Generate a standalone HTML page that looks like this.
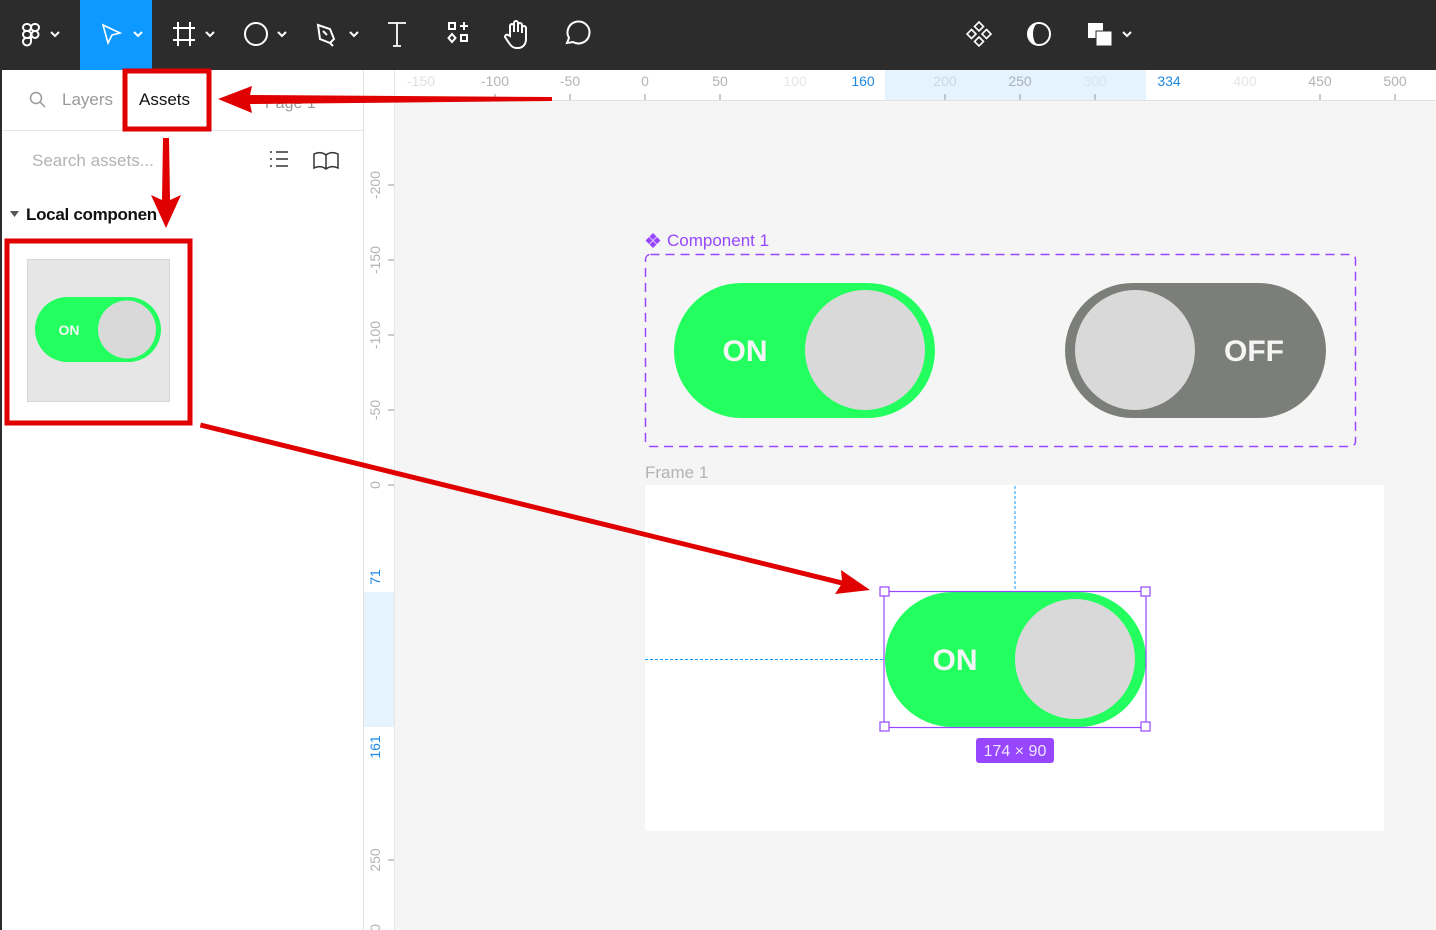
<!DOCTYPE html>
<html><head><meta charset="utf-8"><style>
*{margin:0;padding:0;box-sizing:border-box}
body{width:1436px;height:930px;overflow:hidden;background:#f5f5f5;font-family:"Liberation Sans",sans-serif;position:relative}
.a{position:absolute}
</style></head><body>
<div class="a" style="left:0;top:0;width:1436px;height:70px;background:#2c2c2c"></div>
<div class="a" style="left:80px;top:0;width:72px;height:70px;background:#0d99ff"></div>
<div class="a" style="left:0;top:70px;width:363px;height:860px;background:#fff;border-left:2px solid #2c2c2c"></div>
<div class="a" style="left:2px;top:130px;width:361px;height:1px;background:#e6e6e6"></div>
<div class="a" style="left:62px;top:90px;font-size:17px;color:#999">Layers</div>
<div class="a" style="left:139px;top:90px;font-size:17px;color:#111">Assets</div>
<div class="a" style="left:32px;top:151px;font-size:17px;color:#b3b3b3">Search assets...</div>
<div class="a" style="left:26px;top:205px;font-size:17px;color:#111;font-weight:bold;letter-spacing:-0.3px">Local componen</div>
<div class="a" style="left:27px;top:259px;width:143px;height:143px;background:#e6e6e6;border:1px solid #d6d6d6"></div>
<div class="a" style="left:363px;top:70px;width:1073px;height:31px;background:#fff;border-bottom:1px solid #e0e0e0"></div>
<div class="a" style="left:885px;top:70px;width:261px;height:30px;background:#e5f3ff"></div>
<div class="a" style="left:363px;top:70px;width:32px;height:860px;background:#fff;border-left:1px solid #e0e0e0;border-right:1px solid #e6e6e6"></div>
<div class="a" style="left:364px;top:592px;width:30px;height:135px;background:#e5f3ff"></div>
<div class="a" style="left:645px;top:485px;width:739px;height:346px;background:#fff"></div>
<div class="a" style="left:645px;top:463px;font-size:17px;color:#b3b3b3">Frame 1</div>
<div class="a" style="left:667px;top:231px;font-size:17px;color:#9747ff">Component 1</div>
<svg class="a" style="left:0;top:0" width="1436" height="930" font-family="Liberation Sans, sans-serif">
<g fill="none" stroke="#fff" stroke-width="2">
<rect x="23" y="24" width="8" height="7" rx="3.5"/><rect x="31" y="24" width="8" height="7" rx="3.5"/><rect x="23" y="31" width="8" height="7" rx="3.5"/><circle cx="35" cy="34.5" r="3.5"/><path d="M23 41.5a3.5 3.5 0 1 0 8 0v-3.5h-4.5a3.5 3.5 0 0 0-3.5 3.5z"/>
<path d="M51 32l4 4 4-4M134 32l4 4 4-4M206 32l4 4 4-4M278 32l4 4 4-4M350 32l4 4 4-4M1123 32l4 4 4-4"/>
<path d="M103 25l17 8-8 2-4 8z" stroke-width="1.6"/>
<path d="M178 22v24M190 22v24M173 28h22M173 40h22"/>
<circle cx="256" cy="34" r="11"/>
<path d="M318 25l12 4 4 10-4 4-10-4z M323 31l4 4 M330 43l3 3"/>
<path d="M388 23h18M397 23v23M393 46h8" stroke-width="1.8"/>
<rect x="449" y="23" width="6" height="6"/><path d="M464 22v8M460 26h8"/><path d="M452 34l3.5 4-3.5 4-3.5-4z"/><rect x="461" y="35" width="6" height="6"/>
<path d="M510 36v-10a2 2 0 0 1 4 0v6-9a2 2 0 0 1 4 0v9-7a2 2 0 0 1 4 0v8-5a2 2 0 0 1 4 0v11c0 6-4 9-8 9h-2c-3 0-5-2-7-5l-4-6a2 2 0 0 1 3-2z"/>
<path d="M567 43l2-5a11 11 0 1 1 4 4z"/>
<path d="M979 22l4.5 4.5-4.5 4.5-4.5-4.5zM979 37l4.5 4.5-4.5 4.5-4.5-4.5zM971.5 29.5l4.5 4.5-4.5 4.5-4.5-4.5zM986.5 29.5l4.5 4.5-4.5 4.5-4.5-4.5z" stroke-width="1.6"/>
<circle cx="1039" cy="34" r="11"/>
</g>
<path d="M1039 23a11 11 0 0 0 0 22a6 11 0 0 1 0-22z" fill="#fff"/>
<rect x="1088" y="23" width="15" height="15" fill="#fff"/><rect x="1096" y="31" width="16" height="15" fill="#fff" stroke="#2c2c2c" stroke-width="1"/>
<circle cx="36" cy="98" r="5.5" fill="none" stroke="#999" stroke-width="1.5"/><path d="M40 102l5 5" stroke="#999" stroke-width="1.5"/>
<g stroke="#333" stroke-width="1.5" fill="none"><path d="M270 152h2M270 159h2M270 166h2M276 152h12M276 159h12M276 166h12"/>
<path d="M314 168v-14c4-2 8-2 12 1 4-3 8-3 12-1v14c-4-2-8-2-12 1-4-3-8-3-12-1zM326 155v14"/></g>
<path d="M10 211h9l-4.5 6z" fill="#555"/>
<g font-size="14" fill="#b3b3b3" text-anchor="middle">
<text x="421" y="86" fill="#e0e0e0">-150</text><text x="495" y="86">-100</text><text x="570" y="86">-50</text><text x="645" y="86">0</text><text x="720" y="86">50</text><text x="795" y="86" fill="#e6e6e6">100</text><text x="863" y="86" fill="#1e88e5">160</text><text x="945" y="86" fill="#c8d8e8">200</text><text x="1020" y="86" fill="#a8b0b8">250</text><text x="1095" y="86" fill="#d8e6f2">300</text><text x="1169" y="86" fill="#1e88e5">334</text><text x="1245" y="86" fill="#e6e6e6">400</text><text x="1320" y="86">450</text><text x="1395" y="86">500</text>
</g>
<g stroke="#999" stroke-width="1"><path d="M495 94v6M570 94v6M645 94v6M720 94v6M1020 94v6M1320 94v6M1395 94v6M945 94v6M1095 94v6M388 185h6M388 260h6M388 335h6M388 410h6M388 485h6M388 860h6"/></g>
<g font-size="14" fill="#b3b3b3" text-anchor="middle">
<text transform="translate(380,185) rotate(-90)">-200</text><text transform="translate(380,260) rotate(-90)">-150</text><text transform="translate(380,335) rotate(-90)">-100</text><text transform="translate(380,410) rotate(-90)">-50</text><text transform="translate(380,485) rotate(-90)">0</text><text transform="translate(380,577) rotate(-90)" fill="#1e88e5">71</text><text transform="translate(380,747) rotate(-90)" fill="#1e88e5">161</text><text transform="translate(380,860) rotate(-90)">250</text><text transform="translate(380,928) rotate(-90)">0</text>
</g>
<rect x="645.5" y="254.5" width="710" height="192" rx="5" fill="none" stroke="#9747ff" stroke-width="1.5" stroke-dasharray="9 6"/>
<g fill="#9747ff"><path d="M653 233l3.5 3.5-3.5 3.5-3.5-3.5zM653 241l3.5 3.5-3.5 3.5-3.5-3.5zM649 237l3.5 3.5-3.5 3.5-3.5-3.5zM657 237l3.5 3.5-3.5 3.5-3.5-3.5z"/></g>
<rect x="674" y="283" width="261" height="135" rx="67.5" fill="#22ff5f"/><circle cx="865" cy="350" r="60" fill="#d9d9d9"/>
<text x="745" y="361" font-size="30" font-weight="bold" fill="#f5f5f5" text-anchor="middle">ON</text>
<rect x="1065" y="283" width="261" height="135" rx="67.5" fill="#7c7e7a"/><circle cx="1135" cy="350" r="60" fill="#d9d9d9"/>
<text x="1254" y="361" font-size="30" font-weight="bold" fill="#f5f5f5" text-anchor="middle">OFF</text>
<rect x="35" y="297" width="126" height="65" rx="32.5" fill="#22ff5f"/><circle cx="127" cy="329.5" r="29" fill="#d9d9d9"/>
<text x="69" y="335" font-size="14" font-weight="bold" fill="#f5f5f5" text-anchor="middle">ON</text>
<path d="M1015 486v105M645 659.5h240" stroke="#0d99ff" stroke-width="1" stroke-dasharray="3 2"/>
<rect x="885" y="592" width="261" height="135" rx="67.5" fill="#22ff5f"/><circle cx="1075" cy="659" r="60" fill="#d9d9d9"/>
<text x="955" y="670" font-size="30" font-weight="bold" fill="#f5f5f5" text-anchor="middle">ON</text>
<rect x="884" y="591.5" width="262" height="136" fill="none" stroke="#9747ff" stroke-width="1.2"/>
<g fill="#fff" stroke="#9747ff" stroke-width="1.2"><rect x="880" y="587" width="9" height="9"/><rect x="1141" y="587" width="9" height="9"/><rect x="880" y="722" width="9" height="9"/><rect x="1141" y="722" width="9" height="9"/></g>
<rect x="976" y="738" width="78" height="25" rx="3" fill="#9747ff"/>
<text x="1015" y="756" font-size="16" fill="#f0e6ff" text-anchor="middle">174 × 90</text>
<text x="265" y="108" font-size="16" fill="#999">Page 1</text>
<g fill="none" stroke="#e00000" stroke-width="5"><rect x="125" y="71" width="84" height="58"/><rect x="7" y="241" width="183" height="182"/></g>
<path d="M552 97L250 95L252 86L218 99L252 113L250 104L552 101z" fill="#e00000"/>
<path d="M163 138L162 200L151 195L166 228L181 195L170 200L169 138z" fill="#e00000"/>
<path d="M201 422.6L842 580.4L841 570L870 590L835 594L840.8 585.2L199.8 427.4z" fill="#e00000"/>
</svg>
</body></html>
